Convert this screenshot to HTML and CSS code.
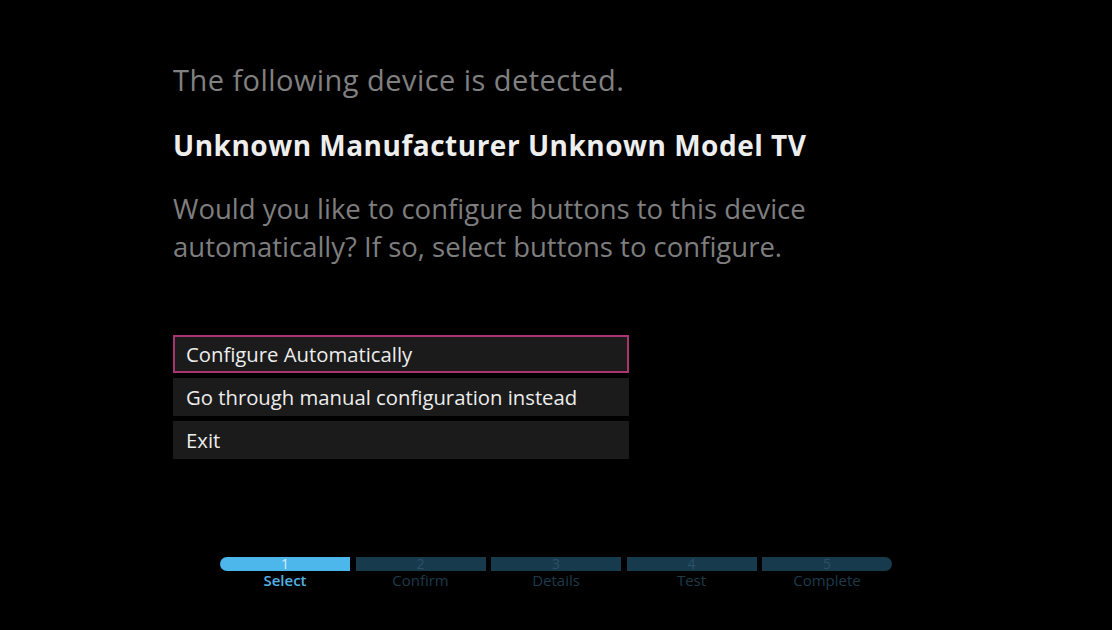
FILE: index.html
```html
<!DOCTYPE html>
<html lang="en">
<head>
<meta charset="utf-8">
<title>Device detected</title>
<link rel="stylesheet" href="styles.css">
</head>
<body>
<div class="screen">
  <div class="content">
    <h1 class="title">The following device is detected.</h1>
    <h2 class="device">Unknown Manufacturer Unknown Model TV</h2>
    <p class="question">Would you like to configure buttons to this device<br>automatically? If so, select buttons to configure.</p>
    <ul class="menu">
      <li class="menu-item selected">Configure Automatically</li>
      <li class="menu-item">Go through manual configuration instead</li>
      <li class="menu-item">Exit</li>
    </ul>
  </div>
  <div class="progress">
    <div class="step active first"><div class="bar">1</div><div class="label">Select</div></div>
    <div class="step"><div class="bar">2</div><div class="label">Confirm</div></div>
    <div class="step"><div class="bar">3</div><div class="label">Details</div></div>
    <div class="step"><div class="bar">4</div><div class="label">Test</div></div>
    <div class="step last"><div class="bar">5</div><div class="label">Complete</div></div>
  </div>
</div>
</body>
</html>
```

FILE: styles.css
```css
html, body {
  margin: 0;
  padding: 0;
  background: #000;
}
body {
  font-family: "Open Sans", "Noto Sans", sans-serif;
  width: 1112px;
  height: 630px;
  overflow: hidden;
}
.screen {
  padding-top: 61px;
}
.content {
  padding-left: 173px;
}
.title {
  margin: 0;
  font-size: 29px;
  line-height: 38px;
  font-weight: 400;
  letter-spacing: 0.45px;
  color: #808080;
}
.device {
  margin: 27px 0 0;
  font-size: 28px;
  line-height: 38px;
  font-weight: 700;
  letter-spacing: 0.5px;
  color: #eeeeee;
}
.question {
  margin: 26px 0 0;
  font-size: 27.5px;
  line-height: 38px;
  color: #7e7e7e;
}
.menu {
  list-style: none;
  margin: 69px 0 0;
  padding: 0;
  width: 456px;
  display: flex;
  flex-direction: column;
  gap: 5px;
}
.menu-item {
  box-sizing: border-box;
  height: 38px;
  background: #1b1b1b;
  border: 2px solid transparent;
  padding: 1px 0 0 11px;
  font-size: 20.3px;
  line-height: 33px;
  color: #ededed;
}
.menu-item.selected {
  border-color: #a8356f;
}
.progress {
  margin: 98px 0 0 220px;
  width: 672px;
  display: flex;
  gap: 5.5px;
}
.step {
  flex: 1;
  text-align: center;
}
.bar {
  height: 14px;
  background: #183a4d;
  color: #2b5165;
  font-size: 14px;
  line-height: 14px;
}
.label {
  margin-top: 1px;
  font-size: 15px;
  line-height: 16px;
  color: #1e3a4b;
}
.step.first .bar {
  border-radius: 7px 0 0 7px;
}
.step.last .bar {
  border-radius: 0 7px 7px 0;
}
.step.active .bar {
  background: #4db6ea;
  color: #d8eef9;
}
.step.active .label {
  color: #55b2e5;
  font-weight: 600;
}
```
